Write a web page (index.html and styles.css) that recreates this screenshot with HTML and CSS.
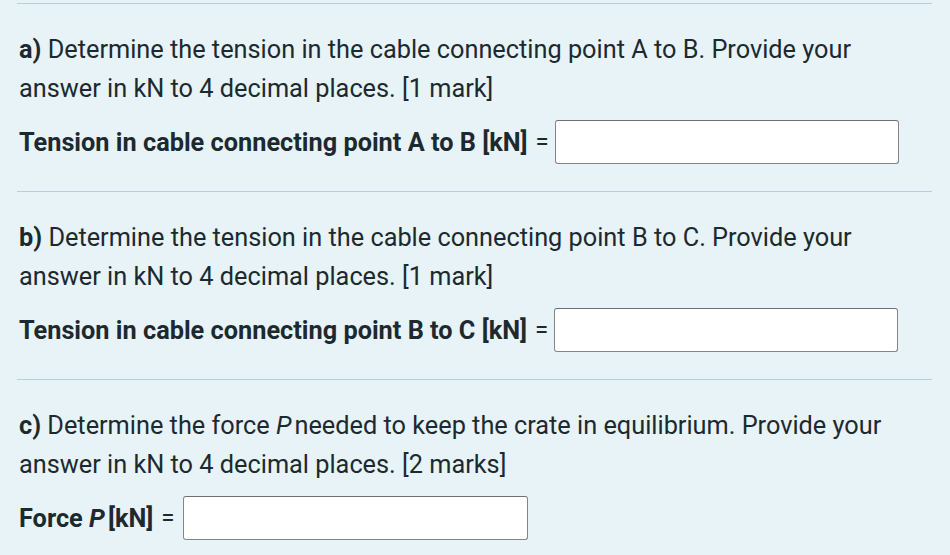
FILE: index.html
```html
<!DOCTYPE html>
<html>
<head>
<meta charset="utf-8">
<link rel="stylesheet" href="styles.css">
</head>
<body>
<div class="page">
  <section class="part">
    <p class="prompt"><b>a)</b> Determine the tension in the cable connecting point A to B. Provide your answer in kN to 4 decimal places. [1 mark]</p>
    <div class="answer"><span class="label">Tension in cable connecting point A to B [kN]</span><span class="eq">=</span><input class="box" type="text"></div>
  </section>
  <section class="part">
    <p class="prompt"><b>b)</b> Determine the tension in the cable connecting point B to C. Provide your answer in kN to 4 decimal places. [1 mark]</p>
    <div class="answer"><span class="label">Tension in cable connecting point B to C [kN]</span><span class="eq">=</span><input class="box" type="text"></div>
  </section>
  <section class="part">
    <p class="prompt"><b>c)</b> Determine the force <i>P</i>needed to keep the crate in equilibrium. Provide your answer in kN to 4 decimal places. [2 marks]</p>
    <div class="answer"><span class="label">Force <i>P</i>[kN]</span><span class="eq eq-short">=</span><input class="box wide" type="text"></div>
  </section>
</div>
</body>
</html>
```
FILE: styles.css
```css
html, body {
  margin: 0;
  padding: 0;
  background: #e7f3f6;
}
body {
  font-family: Roboto, "Liberation Sans", sans-serif;
  color: #1c2a30;
}
.page {
  padding: 3px 18px 0 17px;
}
.part {
  border-top: 1px solid #b9cfd8;
  padding: 26px 0 27px 2px;
}
.prompt {
  margin: 0;
  font-size: 25.3px;
  line-height: 39px;
  width: 880px;
}
.prompt b {
  font-weight: 700;
}
.prompt i {
  padding-right: 3px;
}
.answer {
  margin-top: 12px;
  display: flex;
  align-items: center;
}
.label {
  font-size: 25.3px;
  font-weight: 700;
}
.label i {
  padding-right: 3px;
}
.eq {
  font-size: 24px;
  margin: 0 6px 0 8px;
}
.eq-short {
  margin-right: 9px;
}
.box {
  box-sizing: border-box;
  width: 344px;
  height: 44px;
  margin: 0;
  border: 1px solid #858585;
  border-top-color: #6f6f6f;
  border-radius: 3px;
  background: #fff;
  padding: 0 8px;
  font-size: 20px;
}
.box.wide {
  width: 345px;
}
```
